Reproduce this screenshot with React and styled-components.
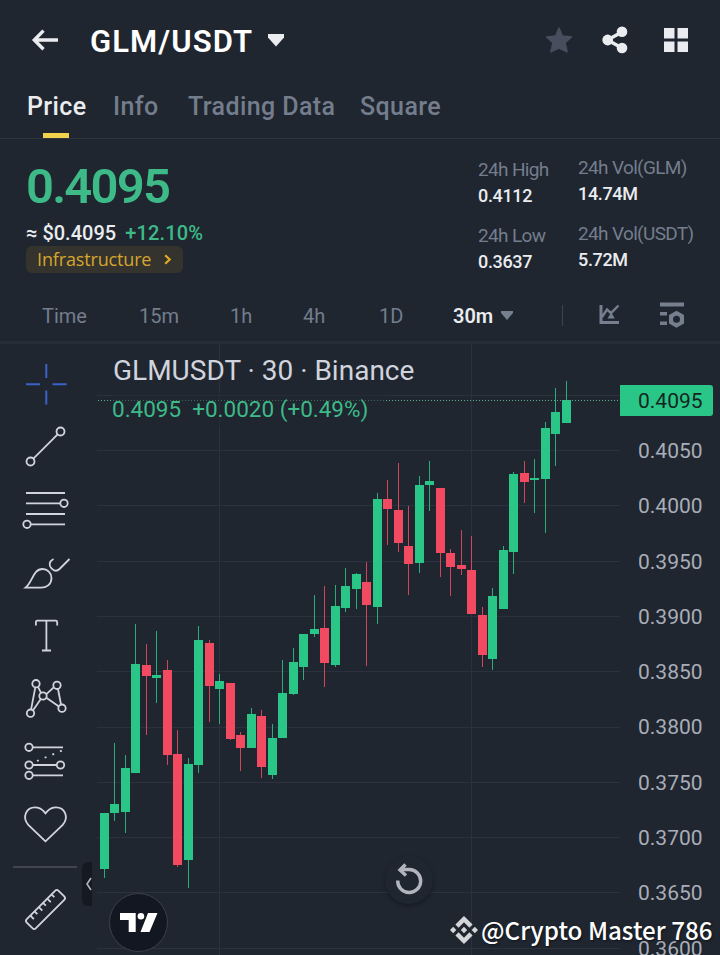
import React from 'react'
import styled, { createGlobalStyle } from 'styled-components'
import { SiBinance } from 'react-icons/si'

const GREEN = '#2ac688'
const RED = '#f24a60'

const tabs = ['Price', 'Info', 'Trading Data', 'Square']
const intervals = ['Time', '15m', '1h', '4h', '1D']
const prices = ['0.4050', '0.4000', '0.3950', '0.3900', '0.3850', '0.3800', '0.3750', '0.3700', '0.3650', '0.3600']

// body top, body bottom, wick top, wick bottom, falling
const candles = [
    [813, 869, 813, 878], [804, 813, 743, 821], [768, 812, 755, 833], [664, 773, 624, 773],
    [665, 676, 644, 735, 1], [675, 678, 631, 703], [670, 755, 660, 765, 1], [754, 865, 730, 867, 1],
    [764, 860, 758, 888], [640, 765, 626, 773], [643, 686, 640, 722, 1], [681, 689, 674, 724],
    [683, 739, 683, 740, 1], [735, 748, 732, 771, 1], [714, 748, 708, 748], [716, 767, 710, 778, 1],
    [738, 775, 724, 779], [693, 738, 660, 738], [662, 694, 648, 695], [634, 667, 634, 680],
    [629, 634, 595, 637], [628, 663, 586, 687, 1], [606, 665, 585, 667], [586, 608, 568, 612],
    [574, 589, 573, 609], [582, 605, 562, 666, 1], [499, 607, 493, 624], [499, 509, 480, 545, 1],
    [510, 543, 463, 552, 1], [546, 564, 506, 595, 1], [485, 563, 476, 573], [481, 485, 461, 511],
    [488, 553, 488, 577, 1], [553, 567, 549, 596, 1], [565, 569, 530, 575, 1], [570, 614, 536, 614, 1],
    [615, 655, 607, 667, 1], [596, 659, 588, 670], [550, 609, 546, 609], [474, 552, 472, 574],
    [473, 482, 461, 503, 1], [478, 480, 459, 513], [428, 479, 422, 533], [412, 434, 388, 466],
    [400, 423, 381, 423],
]

const tools = [
    <g key="cross" stroke="#3b62c9" strokeWidth="2"><path d="M26.3 6v14M26.3 32.5v14M6 26.3h14M32.5 26.3h14" /></g>,
    <g key="trend"><circle cx="40.5" cy="10.5" r="4" /><circle cx="10.5" cy="40.5" r="4" /><path d="M37.6 13.4 13.4 37.6" /></g>,
    <g key="fib"><path d="M6 9h39M6 19.3h34M6 30h39M11 40.3h34" /><circle cx="44" cy="19.3" r="3.7" /><circle cx="7" cy="40.3" r="3.7" /></g>,
    <g key="brush"><path d="M5.5 40.7C13 34.500 13 22 22.500 22c5 0 9 4 9 9 0 6-4.500 9.700-10.500 9.700Z" /><path d="M33.500 12c-4.500 2.500-4.800 6.500-2.200 9.200 3 3.500 6 3 8.200.8L49.500 12" /></g>,
    <g key="text"><path d="M15.900 15.500v-3.300q0-1.500 1.500-1.500h18.300q1.500 0 1.500 1.500v3.300M26.400 10.700v29.800M22 40.500h9" /></g>,
    <g key="pattern"><path d="m15.300 14.400-4.200 22M18 13.900l3 5.900M26.400 21.200l7.300-6.900M38 16l3 15.500M20.800 26l-7.700 11.200M26.300 24.800l12.300 8.400" /><circle cx="16" cy="10.700" r="3.700" /><circle cx="37" cy="12.300" r="3.700" /><circle cx="23" cy="23" r="3.700" /><circle cx="10.500" cy="40.200" r="3.700" /><circle cx="42" cy="35.200" r="3.700" /></g>,
    <g key="forecast"><path d="M13 11.300h30M13 29h23.500M13 39.300h30" /><path d="m17 25 25-10.500" strokeDasharray="2 6.300" /><circle cx="9" cy="11.300" r="3.700" /><circle cx="9" cy="29" r="3.700" /><circle cx="40.500" cy="29" r="3.700" /><circle cx="9" cy="39.300" r="3.700" /></g>,
    <g key="heart"><path d="M25.500 42.300 8.300 25.800C1.500 18 6.500 8.300 15 8.300c4.500 0 7 2 8.800 4l1.700 2 1.700-2c1.800-2 4.300-4 8.800-4 8.500 0 13.500 9.700 6.700 17.500Z" /></g>,
]

const App = () => {
    return (
        <Screen>
            <GlobalStyle />
            <Header>
                <svg width="28" height="24" fill="none" stroke="#eaecef" strokeWidth="3.4">
                    <path d="M12.500 2.600 3.300 12l9.200 9.300M3.500 12H27" />
                </svg>
                <Pair>GLM/USDT</Pair>
                <svg width="16" height="13" fill="#eaecef"><path d="M0 0h16v3.500L8 12.500 0 3.500Z" /></svg>
                <Actions>
                    <svg width="28" height="28" fill="#474f5e" stroke="#474f5e" strokeWidth="1.500" strokeLinejoin="round">
                        <path d="m14 2 3.400 8 9 .9-6.300 5.900 2 9L14 22l-8.100 3.800 2-9-6.300-5.900 9-.9Z" />
                    </svg>
                    <svg width="28" height="28" fill="#eaecef">
                        <path d="M6.500 14 21 6M6.500 14 21 22" stroke="#eaecef" strokeWidth="3.600" />
                        <circle cx="6.700" cy="14" r="5.400" /><circle cx="21" cy="5.800" r="5.300" /><circle cx="21" cy="22" r="5.300" />
                    </svg>
                    <svg width="26" height="26" fill="#eaecef">
                        <path d="M1 1h10.500v10.500H1zM14.500 1H25v10.500H14.500zM1 14.500h10.500V25H1zM14.500 14.500H25V25H14.500z" />
                    </svg>
                </Actions>
            </Header>
            <Tabs>
                {tabs.map((tab, i) => <Tab key={tab} $active={i === 0}>{tab}</Tab>)}
            </Tabs>
            <Summary>
                <div>
                    <Price>0.4095</Price>
                    <Change><span>≈ $0.4095</span><Gain>+12.10%</Gain></Change>
                    <Tag>
                        Infrastructure
                        <svg width="8" height="11" fill="none" stroke="#dfab22" strokeWidth="2.200"><path d="m1.200 1.200 4.500 4.300-4.500 4.300" /></svg>
                    </Tag>
                </div>
                <Stats $top={2}>
                    <Label>24h High</Label><Value>0.4112</Value>
                    <Label>24h Low</Label><Value>0.3637</Value>
                </Stats>
                <Stats $top={0}>
                    <Label>24h Vol(GLM)</Label><Value>14.74M</Value>
                    <Label>24h Vol(USDT)</Label><Value>5.72M</Value>
                </Stats>
            </Summary>
            <Intervals>
                {intervals.map(name => <span key={name}>{name}</span>)}
                <Current>30m <svg width="12" height="9" fill="#767f8e"><path d="M0 0h12v2L6 9 0 2Z" /></svg></Current>
                <Separator />
                <svg width="22" height="22" fill="none" stroke="#767f8e" strokeWidth="2.400">
                    <path d="M2 1v17.500h18" strokeWidth="3" /><path d="m3 13 5-7.500 4 3.500 7.500-7.500" />
                    <path d="m12.300 8.500 3.500 6H8.500Z" fill="#767f8e" stroke="none" />
                </svg>
                <svg width="26" height="28" fill="#767f8e">
                    <path d="M1 1.500h24v4H1zM1 11h7v3.500H1zM1 20.500h7V24H1z" />
                    <path fillRule="evenodd" d="m17.500 9.800 7.500 4.200v8.500l-7.500 4.200-7.500-4.200V14Zm0 5a3.500 3.500 0 1 0 0 7 3.500 3.500 0 0 0 0-7Z" />
                </svg>
            </Intervals>
            <Chart>
                <Toolbar>
                    {tools.map(tool => <Tool key={tool.key}><ToolIcon>{tool}</ToolIcon></Tool>)}
                    <Rule />
                    <Tool>
                        <ToolIcon>
                            <g transform="translate(25.500 25.500) rotate(-45)">
                                <rect x="-22.500" y="-6.500" width="45" height="13" rx="2.500" />
                                <path d="M-15-6.500v5M-9-6.500v4M-3-6.500v5M3-6.500v4M9-6.500v5M15-6.500v4" />
                            </g>
                        </ToolIcon>
                    </Tool>
                    <Collapse>
                        <svg width="7" height="14" fill="none" stroke="#b2b5be" strokeWidth="1.600"><path d="M6 1 2 7l4 6" /></svg>
                    </Collapse>
                </Toolbar>
                <Plot>
                    <Candles />
                    <Legend>
                        <Symbol>GLMUSDT · 30 · Binance</Symbol>
                        <Quote><span>0.4095</span><span>+0.0020 (+0.49%)</span></Quote>
                    </Legend>
                    <Brand>
                        <svg width="38" height="20" fill="#fff">
                            <path d="M0 0h15.700v19H8.700V7H0zM28 0h9.500l-8 19h-9z" /><circle cx="20.900" cy="3.300" r="3.300" />
                        </svg>
                    </Brand>
                    <Reset>
                        <svg width="30" height="34" fill="none" stroke="#b2b5be" strokeWidth="3.400">
                            <path d="M3.700 17.500A11.500 11.500 0 1 0 15.200 6.500H6" /><path d="M11.500 1.500 6 7l6 5.500" />
                        </svg>
                    </Reset>
                </Plot>
                <Axis>
                    {prices.map(price => <Tick key={price}>{price}</Tick>)}
                    <LastPrice>0.4095</LastPrice>
                </Axis>
            </Chart>
            <Watermark><SiBinance size={28} color="#d5d6d8" />@Crypto Master 786</Watermark>
        </Screen>
    )
}

const Candles = () => (
    <svg width="523" height="611" viewBox="97 344 523 611" shapeRendering="crispEdges">
        {[395, ...prices.map((_, i) => Math.round(450 + i * 55.3))].map(y => (
            <rect key={y} x="97" y={y} width="523" height="1" fill="#2b323d" />
        ))}
        <path d="M219.500 344v611M471.500 344v611" stroke="#2b323d" />
        {candles.map(([top, bottom, high, low, falling], i) => {
            const x = 100 + Math.floor(i * 10.5)
            return (
                <g key={i} fill={falling ? RED : GREEN}>
                    <rect x={x + 4} y={high} width="1" height={low - high} opacity="0.85" />
                    <rect x={x} y={top} width="9" height={bottom - top} />
                </g>
            )
        })}
        <path d="M98 400.500h522" stroke="#5cae8d" strokeDasharray="1 2" />
    </svg>
)

const GlobalStyle = createGlobalStyle`
    body {
        margin: 0;
        background: #1f2630;
    }

    svg {
        display: block;
        flex: none;
    }
`

const Screen = styled.div`
    position: relative;
    width: 720px;
    height: 955px;
    overflow: hidden;
    background: #1f2630;
    color: #eaecef;
    font-family: Roboto, "Liberation Sans", sans-serif;
    white-space: nowrap;
`

const Header = styled.header`
    height: 80px;
    box-sizing: border-box;
    padding: 0 31px 0 31px;
    display: flex;
    align-items: center;
`

const Pair = styled.h1`
    width: 163px;
    margin: 3px 15px 0 31px;
    font-size: 31px;
    font-weight: 600;
    letter-spacing: 1.1px;
    color: #fff;
`

const Actions = styled.div`
    margin-left: auto;
    display: flex;
    align-items: center;
    gap: 28px;

    svg:last-child {
        margin-left: 6px;
    }
`

const Tabs = styled.nav`
    height: 58px;
    padding-left: 27px;
    display: grid;
    grid-template-columns: 86px 75px 172px 100px;
    border-bottom: 1px solid #2c343f;
`

const Tab = styled.span`
    position: relative;
    font-size: 25px;
    font-weight: 500;
    line-height: 53px;
    letter-spacing: 0.4px;
    color: ${props => props.$active ? '#eaecef' : '#747d8c'};

    &::after {
        content: ${props => props.$active ? '""' : 'none'};
        position: absolute;
        left: 16px;
        bottom: 0;
        width: 26px;
        height: 5px;
        background: #f3d24b;
    }
`

const Summary = styled.section`
    height: 151px;
    box-sizing: border-box;
    padding: 16px 0 0 26px;
    display: grid;
    grid-template-columns: 452px 100px 1fr;
`

const Price = styled.div`
    margin-top: 1px;
    font-size: 49px;
    font-weight: 600;
    line-height: 62px;
    letter-spacing: -1.8px;
    color: #3dba88;
`

const Change = styled.div`
    display: flex;
    gap: 9px;
    font-size: 20px;
    font-weight: 500;
    line-height: 30px;
`

const Gain = styled.span`
    letter-spacing: 0.15px;
    color: #3dba88;
`

const Tag = styled.div`
    width: 157px;
    height: 27px;
    box-sizing: border-box;
    margin-top: -2px;
    padding: 0 11px 1px;
    display: flex;
    align-items: center;
    justify-content: space-between;
    border-radius: 6px;
    background: #35332d;
    color: #d5a62d;
    font: 400 18px "Open Sans", sans-serif;
    letter-spacing: -0.15px;
`

const Stats = styled.div`
    padding-top: ${props => props.$top}px;
`

const Label = styled.div`
    font-size: 19px;
    line-height: 26px;
    letter-spacing: -0.65px;
    color: #747d8c;
`

const Value = styled.div`
    margin-bottom: 14px;
    font-size: 18px;
    font-weight: 500;
    line-height: 26px;
    letter-spacing: -0.35px;
`

const Intervals = styled.div`
    height: 51px;
    padding-left: 42px;
    display: grid;
    grid-template-columns: 97px 91px 73px 76px 74px 109px 37px 60px 30px;
    align-items: center;
    font-size: 20px;
    color: #747d8c;

    > svg {
        margin-top: -2px;
    }
`

const Current = styled.div`
    display: flex;
    align-items: center;
    gap: 8px;
    font-weight: 600;
    color: #eaecef;
`

const Separator = styled.i`
    width: 1px;
    height: 21px;
    background: #3c4450;
`

const Chart = styled.section`
    height: 611px;
    display: grid;
    grid-template-columns: 97px 523px 100px;
    border-top: 3px solid #272e39;
`

const Toolbar = styled.aside`
    position: relative;
    padding-top: 8px;
`

const Tool = styled.div`
    height: 63px;
    padding-left: 20px;
    display: flex;
    align-items: center;
`

const ToolIcon = styled.svg.attrs({ viewBox: '0 0 52 52' })`
    width: 52px;
    height: 52px;
    fill: none;
    stroke: #d1d4dc;
    stroke-width: 1.8px;
`

const Rule = styled.div`
    width: 64px;
    height: 2px;
    margin: 10px 0 10px 13px;
    background: #40454f;
`

const Collapse = styled.div`
    position: absolute;
    left: 82px;
    top: 518px;
    width: 10px;
    height: 44px;
    display: flex;
    align-items: center;
    justify-content: flex-end;
    border-radius: 6px 0 0 6px;
    background: #141922;
`

const Plot = styled.div`
    position: relative;
    overflow: hidden;
`

const Legend = styled.div`
    position: absolute;
    left: 12px;
    top: 10px;
    width: 272px;
    padding-left: 4px;
`

const Symbol = styled.div`
    font-size: 28px;
    line-height: 34px;
    color: #d1d4dc;
`

const Quote = styled.div`
    margin: 3px 0 0 -1px;
    display: flex;
    gap: 11px;
    font-size: 22.5px;
    line-height: 36px;
    color: #3dba88;
    background: rgba(31, 38, 48, 0.5);
`

const Brand = styled.div`
    position: absolute;
    left: 12px;
    bottom: 3px;
    width: 57px;
    height: 57px;
    display: flex;
    align-items: center;
    justify-content: center;
    border: 1.5px solid #3b404b;
    border-radius: 50%;
    background: #131722;
`

const Reset = styled.div`
    position: absolute;
    left: 288px;
    top: 512px;
    width: 48px;
    height: 48px;
    display: flex;
    align-items: center;
    justify-content: center;
    border-radius: 50%;
    background: #1f2630;
    box-shadow: 0 2px 4px rgba(0, 0, 0, 0.3);
`

const Axis = styled.div`
    position: relative;
    height: 611px;
    overflow: hidden;
    padding-top: 80px;
    box-sizing: border-box;
`

const Tick = styled.div`
    height: 55.3px;
    padding-left: 18px;
    font-size: 21px;
    line-height: 55.3px;
    color: #a9adb7;
`

const LastPrice = styled.div`
    position: absolute;
    left: 0;
    top: 41px;
    width: 93px;
    height: 31px;
    box-sizing: border-box;
    padding-left: 18px;
    border-radius: 0 3px 3px 0;
    background: #2ac688;
    color: #12261f;
    font-size: 21px;
    line-height: 32px;
`

const Watermark = styled.div`
    position: absolute;
    left: 450px;
    top: 913px;
    display: flex;
    align-items: center;
    gap: 3px;
    font: 500 24.2px/34px "Noto Sans CJK SC", sans-serif;
    color: #fff;
    text-shadow: 1px 1px 2px rgba(0, 0, 0, 0.5);
`

export default App
